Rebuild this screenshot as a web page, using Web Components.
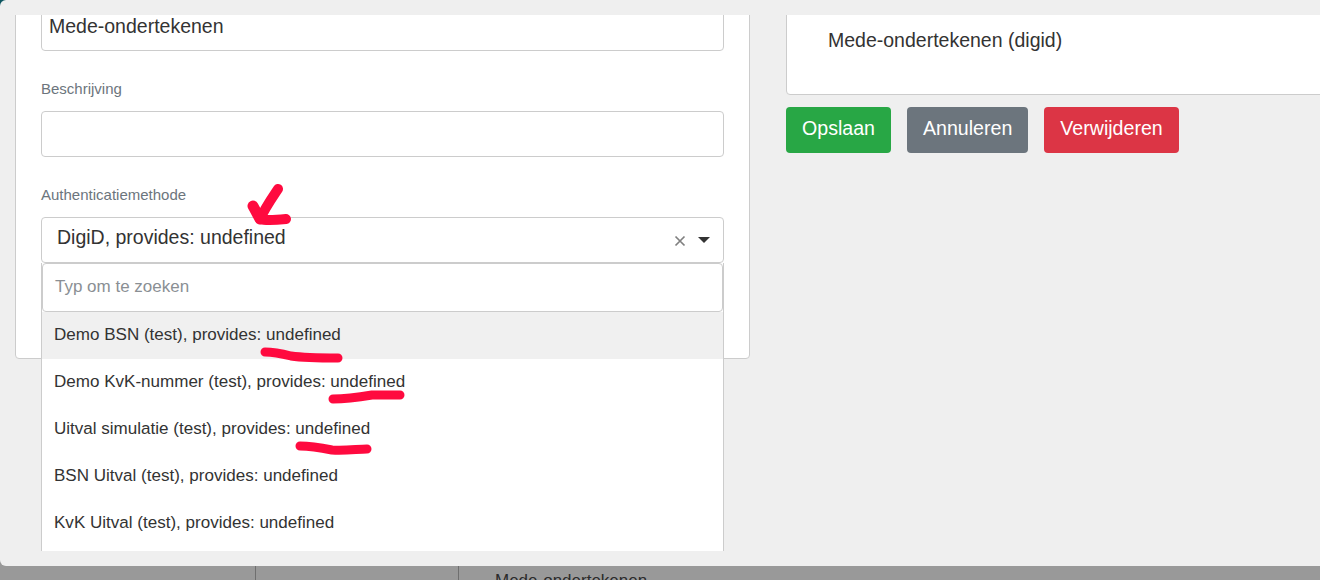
<!DOCTYPE html>
<html lang="nl">
<head>
<meta charset="utf-8">
<title>Mede-ondertekenen</title>
<style>
html,body{margin:0;padding:0;height:580px;overflow:hidden;background:#999;font-family:"Liberation Sans",Arial,sans-serif;color:#333}
</style>
</head>
<body>
<x-app>
  <x-modal>
    <x-card slot="left" form>
      <x-field first value="Mede-ondertekenen"></x-field>
      <x-field label="Beschrijving"></x-field>
      <x-field label="Authenticatiemethode">
        <x-select value="DigiD, provides: undefined" placeholder="Typ om te zoeken">
          <x-option active>Demo BSN (test), provides: undefined</x-option>
          <x-option>Demo KvK-nummer (test), provides: undefined</x-option>
          <x-option>Uitval simulatie (test), provides: undefined</x-option>
          <x-option>BSN Uitval (test), provides: undefined</x-option>
          <x-option>KvK Uitval (test), provides: undefined</x-option>
        </x-select>
      </x-field>
    </x-card>
    <x-card slot="right" summary>Mede-ondertekenen (digid)</x-card>
    <x-button slot="actions" tone="success">Opslaan</x-button>
    <x-button slot="actions" tone="secondary">Annuleren</x-button>
    <x-button slot="actions" tone="danger">Verwijderen</x-button>
  </x-modal>
  <x-backdrop-row>Mede-ondertekenen</x-backdrop-row>
  <x-annotations></x-annotations>
</x-app>
<script>
function def(name, css, html, init){
  customElements.define(name, class extends HTMLElement{
    constructor(){
      super();
      const r=this.attachShadow({mode:'open'});
      r.innerHTML='<style>'+css+'</style>'+(typeof html==='function'?html(this):html);
    }
    connectedCallback(){ if(init) init(this); }
  });
}
def('x-app',':host{display:flex;flex-direction:column;position:relative;width:1320px;height:580px;overflow:hidden;background:linear-gradient(#0d5560 0 8px,#999 8px)}','<slot></slot>');

def('x-modal',`
:host{display:block;flex:none;height:566px;background:#efefef;border-radius:6px 0 0 6px;box-sizing:border-box;padding:15px 0 15px 15px;overflow:hidden}
.scroll{height:536px;overflow:hidden}
.grid{display:grid;grid-template-columns:735px 735px;column-gap:36px;margin-top:-10px}
.actions{display:flex;gap:16px;margin-top:12px}
`,`<div class="scroll"><div class="grid">
<div><slot name="left"></slot></div>
<div><slot name="right"></slot><div class="actions"><slot name="actions"></slot></div></div>
</div></div>`);

def('x-card',`
:host{display:block;box-sizing:border-box;background:#fff;border:1px solid #ccc;border-radius:4px}
:host([form]){height:354px;padding:0 25px}
:host([summary]){height:90px;padding:19px 41px 0;font-size:19.5px;line-height:30px;color:#333}
`,'<slot></slot>');

def('x-field',`
:host{display:block;margin-top:27px}
:host([first]){margin-top:-1px}
label{display:block;font-size:15px;line-height:21px;color:#6c757d;margin-bottom:12px}
.input{box-sizing:border-box;height:46px;border:1px solid #ccc;border-radius:4px;background:#fff;padding:0 7px;font-size:19.5px;line-height:41px;color:#333}
`,el=>{
  const l=el.getAttribute('label');
  const has=el.hasAttribute('value')||!el.children.length;
  return (l?`<label>${l}</label>`:'')+(has?`<div class="input">${el.getAttribute('value')||''}</div>`:'<slot></slot>');
});

def('x-select',`
:host{display:block;position:relative}
.box{box-sizing:border-box;height:46px;border:1px solid #ccc;border-radius:4px;background:#fff;display:flex;align-items:center;padding:0 13px 0 15px;font-size:19.5px;color:#333}
.val{flex:1;margin-top:-6px}
.clear{display:block;width:12px;height:12px;margin-right:12px;margin-top:1px}
.caret{width:0;height:0;border-left:6px solid transparent;border-right:6px solid transparent;border-top:6px solid #333;margin-top:0}
.drop{position:absolute;left:0;right:0;top:100%;box-sizing:border-box;height:320px;background:#fff;border:1px solid #ccc;border-top:0;z-index:2}
.search{box-sizing:border-box;height:49px;border:1px solid #ccc;border-radius:4px;padding:0 12px;font-size:17px;line-height:45px;color:#8a8f94;background:#fff}
`,el=>`<div class="box"><span class="val">${el.getAttribute('value')}</span>
<svg class="clear" viewBox="0 0 12 12" aria-hidden="true"><path d="M1.5 1.5l9 9M10.5 1.5l-9 9" stroke="#808080" stroke-width="1.7" fill="none"/></svg>
<span class="caret"></span></div>
<div class="drop"><div class="search">${el.getAttribute('placeholder')}</div><slot></slot></div>`);

def('x-option',`
:host{display:block;box-sizing:border-box;height:47px;padding:0 12px;font-size:17.05px;line-height:45px;color:#333;background:#fff}
:host([active]){background:#f0f0f0}
`,'<slot></slot>');

def('x-button',`
:host{display:block;box-sizing:border-box;height:46px;padding:0 16px;border-radius:4px;color:#fff;font-size:19.6px;line-height:43px}
:host([tone=success]){background:#28a745}
:host([tone=secondary]){background:#6c757d}
:host([tone=danger]){background:#dc3545}
`,'<slot></slot>');

def('x-backdrop-row',`
:host{display:flex;flex:none;height:14px;overflow:hidden;background:#999;font-size:17px;line-height:20px;color:#2b2b2b}
.a{width:255px;box-sizing:border-box}
.b{width:203px;border-left:1px solid #6f6f6f;box-sizing:border-box}
.c{flex:1;border-left:1px solid #6f6f6f;padding:5px 0 0 36px;white-space:nowrap}
`,'<div class="a"></div><div class="b"></div><div class="c"><slot></slot></div>');

def('x-annotations',`
:host{display:block;position:absolute;left:0;top:0;width:1320px;height:580px;pointer-events:none;z-index:5}
svg{display:block}
path{fill:none;stroke:#ff0a3f;stroke-linecap:round;stroke-linejoin:round}
`,`<svg width="1320" height="580" viewBox="0 0 1320 580" aria-hidden="true">
<path stroke-width="10" d="M278 189C272 198 265 208 260 219C266 221 276 220 286 219"/>
<path stroke-width="11" d="M253 206L260 219"/>
<path stroke-width="9" d="M265 352C275 352 283 354 291 356C305 358 325 358 338 358"/>
<path stroke-width="9" d="M333 399C345 399 360 397 372 395C382 395 392 395 400 395"/>
<path stroke-width="9" d="M300 446C312 446 322 448 332 450C345 451 358 449 367 449"/>
</svg>`);
</script>
</body>
</html>
